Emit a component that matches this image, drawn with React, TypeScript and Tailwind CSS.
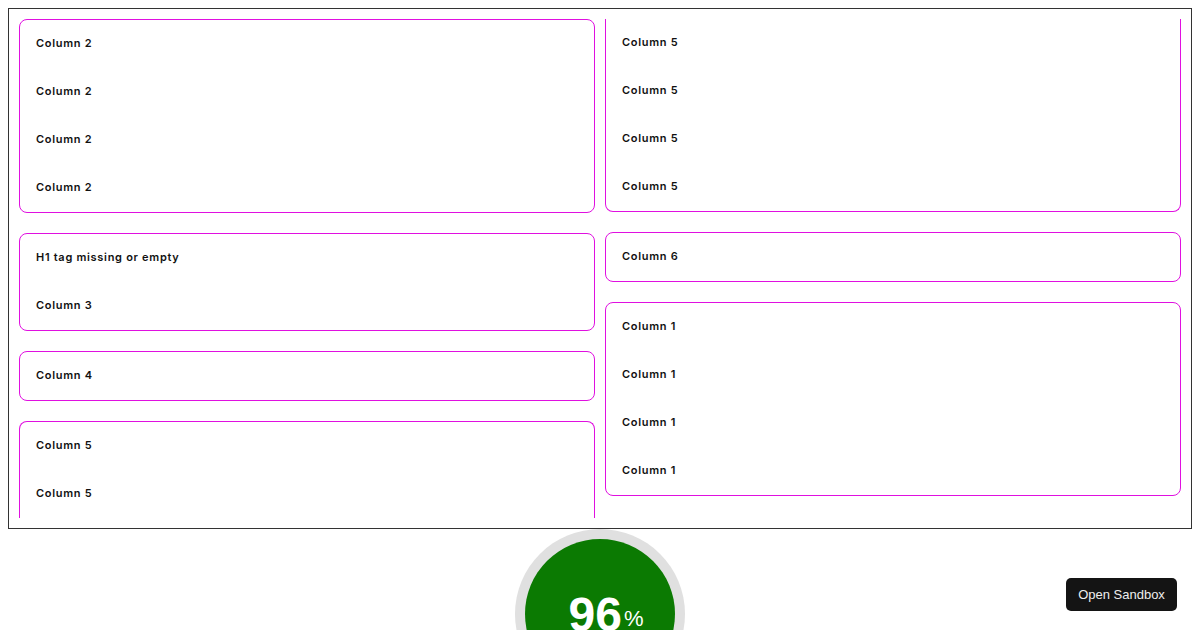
import React from "react";

const cards = [
  { rows: ["Column 2", "Column 2", "Column 2", "Column 2"] },
  { rows: ["H1 tag missing or empty", "Column 3"] },
  { rows: ["Column 4"] },
  { rows: ["Column 5", "Column 5", "Column 5", "Column 5", "Column 5", "Column 5"] },
  { rows: ["Column 6"] },
  { rows: ["Column 1", "Column 1", "Column 1", "Column 1"] },
];

export default function App() {
  return (
    <div className="relative w-[1200px] h-[630px] overflow-hidden bg-white">
      <div className="mx-2 mt-2 h-[521px] border border-[#333] p-[10px]">
        <div className="h-[499px] columns-2 gap-[10px] [column-fill:auto]">
          {cards.map((card, idx) => (
            <div
              key={idx}
              className="mb-5 rounded-lg border border-[#e010e0] bg-white"
            >
              {card.rows.map((row, i) => (
                <div
                  key={i}
                  className="flex h-12 items-center pb-[2px] pl-4 text-[11px] font-semibold tracking-[0.7px] text-[#111] font-['Inter',sans-serif]"
                >
                  {row}
                </div>
              ))}
            </div>
          ))}
        </div>
      </div>

      <div className="flex justify-center">
        <div className="flex h-[170px] w-[170px] items-center justify-center rounded-full bg-[#e0e0e0]">
          <div className="flex h-[150px] w-[150px] items-end justify-center rounded-full bg-[#0b7a02] pb-[50px] pl-3 text-white font-['Liberation_Sans',Arial,sans-serif]">
            <span className="text-[48px] font-bold leading-none">96</span>
            <span className="ml-[2px] mb-[9px] text-[22px] leading-none">%</span>
          </div>
        </div>
      </div>

      <button className="absolute bottom-[19px] right-[23px] h-[33px] w-[111px] rounded-[5px] bg-[#141414] text-[13px] text-[#eee] font-['Liberation_Sans',Arial,sans-serif]">
        Open Sandbox
      </button>
    </div>
  );
}
